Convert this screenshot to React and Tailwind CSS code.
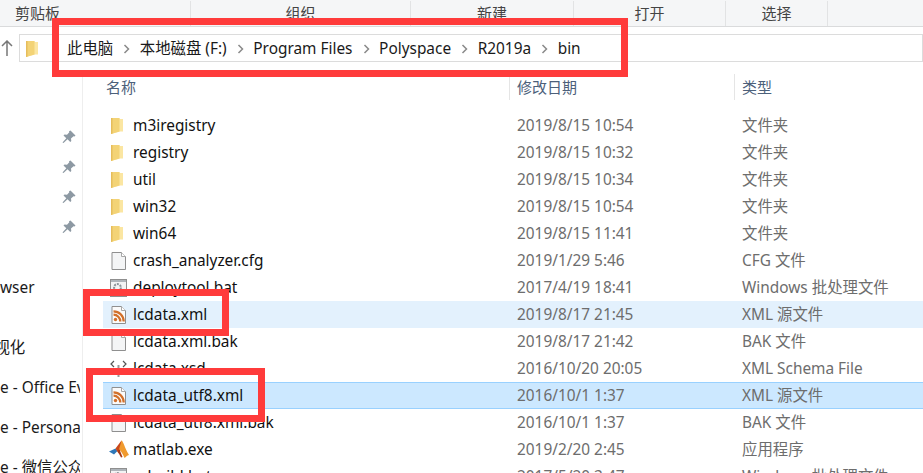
const font = { fontFamily: '"Noto Sans", "Noto Sans CJK SC", sans-serif' }

const files = [
  { name: 'm3iregistry', date: '2019/8/15 10:54', type: '文件夹', icon: 'folder' },
  { name: 'registry', date: '2019/8/15 10:32', type: '文件夹', icon: 'folder' },
  { name: 'util', date: '2019/8/15 10:34', type: '文件夹', icon: 'folder' },
  { name: 'win32', date: '2019/8/15 10:54', type: '文件夹', icon: 'folder' },
  { name: 'win64', date: '2019/8/15 11:41', type: '文件夹', icon: 'folder' },
  { name: 'crash_analyzer.cfg', date: '2019/1/29 5:46', type: 'CFG 文件', icon: 'file' },
  { name: 'deploytool.bat', date: '2017/4/19 18:41', type: 'Windows 批处理文件', icon: 'bat' },
  { name: 'lcdata.xml', date: '2019/8/17 21:45', type: 'XML 源文件', icon: 'xml', state: 'hover' },
  { name: 'lcdata.xml.bak', date: '2019/8/17 21:42', type: 'BAK 文件', icon: 'file' },
  { name: 'lcdata.xsd', date: '2016/10/20 20:05', type: 'XML Schema File', icon: 'xsd' },
  { name: 'lcdata_utf8.xml', date: '2016/10/1 1:37', type: 'XML 源文件', icon: 'xml', state: 'selected' },
  { name: 'lcdata_utf8.xml.bak', date: '2016/10/1 1:37', type: 'BAK 文件', icon: 'file' },
  { name: 'matlab.exe', date: '2019/2/20 2:45', type: '应用程序', icon: 'matlab' },
  { name: 'mbuild.bat', date: '2017/5/20 3:47', type: 'Windows 批处理文件', icon: 'bat' },
]

const crumbs = ['此电脑', '本地磁盘 (F:)', 'Program Files', 'Polyspace', 'R2019a', 'bin']

function Folder({ className = '' }) {
  return (
    <svg width="12" height="17" viewBox="0 0 12 17" className={className}>
      <path d="M0 1h8l1 1h3v12.500h-3l-9 2.500z" fill="#fbe6a2" />
      <path d="M0 1h8.500v13.500l-8.500 2.500z" fill="#f3d376" />
      <path d="M0 1h1.500v15.500l-1.500 .5z" fill="#e6bd5c" />
    </svg>
  )
}

function PlainFile() {
  return (
    <svg width="15" height="18" viewBox="0 0 15 18">
      <path d="M1 .5h9.500l4 4v13h-13.500z" fill="#f4f5f6" stroke="#8f8f8f" />
      <path d="M10.500 .5v4h4" fill="#fff" stroke="#a8a8a8" />
    </svg>
  )
}

function XmlFile() {
  return (
    <svg width="15" height="18" viewBox="0 0 15 18">
      <path d="M1 .5h9.500l4 4v13h-13.500z" fill="#fbfbfb" stroke="#8f8f8f" />
      <path d="M10.500 .5v4h4" fill="#fff" stroke="#a8a8a8" />
      <circle cx="4.500" cy="13.500" r="1.700" fill="#d2702a" />
      <path d="M2.500 8.700a6.800 6.800 0 0 1 6.800 6.800M2.500 5.300a10.200 10.200 0 0 1 10.200 10.200" fill="none" stroke="#d2702a" strokeWidth="2.300" />
    </svg>
  )
}

function BatFile() {
  return (
    <svg width="18" height="18" viewBox="0 0 18 18">
      <rect x=".5" y=".5" width="16" height="17" fill="#f2f3f4" stroke="#8f8f8f" />
      <path d="M1 1h15v2h-15z" fill="#aeb4ba" />
      <circle cx="7.500" cy="8.500" r="3.400" fill="none" stroke="#8d949a" strokeWidth="2" strokeDasharray="2 1" />
      <circle cx="11.500" cy="13" r="2.400" fill="none" stroke="#7f9fb8" strokeWidth="1.500" strokeDasharray="1.500 1" />
    </svg>
  )
}

function XsdFile() {
  return (
    <svg width="17" height="18" viewBox="0 0 17 18">
      <path d="M4 1l-3 3 3 3M13 1l3 3-3 3" fill="none" stroke="#555" strokeWidth="1.200" />
      <path d="M8.500 5v12" stroke="#999" strokeWidth="2" />
    </svg>
  )
}

function Matlab() {
  return (
    <svg width="20" height="20" viewBox="0 0 20 20">
      <path d="M0 11.500l6.500-3 2 2.500-3.500 3.500z" fill="#2f78b8" />
      <path d="M6.500 8.500l6-8 1.500 5-4.500 8z" fill="#c9481a" />
      <path d="M12.500 .5c2 1 3 7 7.500 14.500-2 .2-3 2-4.500 3-1.500-3-3-7-5.500-8.500z" fill="#f09a2e" />
      <path d="M8.500 11l2-1.500 3 7.500-1.500 .5z" fill="#a83a14" />
    </svg>
  )
}

function RowIcon({ icon }) {
  if (icon === 'folder') return <Folder className="-ml-[3px]" />
  if (icon === 'xml') return <XmlFile />
  if (icon === 'bat') return <BatFile />
  if (icon === 'xsd') return <XsdFile />
  if (icon === 'matlab') return <Matlab />
  return <PlainFile />
}

function Pin() {
  return (
    <svg width="14" height="14" viewBox="0 0 14 14">
      <path d="M8.500 .5l5 5-1 1-1-.3-2.500 2.300.3 2.500-1 1-2.800-2.800-4 3.800-1-.5 3.800-4.300-2.800-2.800 1-1 2.500.3 2.300-2.500-.3-1z" fill="#8d99a3" />
    </svg>
  )
}

function Mark({ className }) {
  return <div className={`absolute border-[7px] border-[#ff3b3b] ${className}`} />
}

export default function App() {
  return (
    <div style={font} className="relative h-[473px] w-[923px] overflow-hidden bg-white text-[15.4px] leading-none">
      {/* ribbon group labels */}
      <div className="flex h-[27px] border-b border-[#dadbdc] bg-[#f5f6f7] pt-[1px] text-[15px] text-[#444]">
        <div className="flex w-[191px] items-center border-r border-[#e2e3e4] pl-[15px]">剪贴板</div>
        <div className="flex w-[220px] items-center justify-center border-r border-[#e2e3e4]">组织</div>
        <div className="flex w-[163px] items-center justify-center border-r border-[#e2e3e4]">新建</div>
        <div className="flex w-[152px] items-center justify-center border-r border-[#e2e3e4]">打开</div>
        <div className="flex w-[102px] items-center justify-center border-r border-[#e2e3e4]">选择</div>
      </div>

      {/* address bar */}
      <div className="flex h-[47px] pt-[7px]">
        <div className="flex h-[28px] w-[19px] items-center pl-[1px]">
          <svg width="12" height="16" viewBox="0 0 12 16"><path d="M6 1v15M1 6l5-5 5 5" fill="none" stroke="#777" strokeWidth="1.500" /></svg>
        </div>
        <div className="flex h-[28px] flex-1 items-center border border-[#dcdcdc] pl-[6px]">
          <Folder className="mr-[29px]" />
          <div className="flex items-center pt-[1px] text-[#1a1a1a]">
            {crumbs.map((c, i) => (
              <span key={c} className="flex items-center">
                {i > 0 && (
                  <svg width="26.600" height="10" viewBox="0 0 26.600 10"><path d="M11.500 1l4 4-4 4" fill="none" stroke="#8a8a8a" strokeWidth="1.500" /></svg>
                )}
                {c}
              </span>
            ))}
          </div>
        </div>
      </div>

      <div className="flex">
        {/* nav pane */}
        <div className="h-[399px] w-[83px] shrink-0 overflow-hidden border-r border-[#eeeeee] text-[#1a1a1a]">
          <div className="flex flex-col items-end gap-[16px] pt-[56px] pr-[6px]">
            <Pin />
            <Pin />
            <Pin />
            <Pin />
          </div>
          <div className="mt-[46px] flex w-[80px] flex-col gap-[20px] overflow-hidden whitespace-nowrap">
            <div className="-ml-[9px] h-[20px]">owser</div>
            <div className="mt-[20px] -ml-[21px] h-[20px]">可视化</div>
            <div className="h-[20px]">e - Office Eve</div>
            <div className="h-[20px]">e - Personal</div>
            <div className="h-[20px]">e - 微信公众号</div>
          </div>
        </div>

        {/* file list */}
        <div className="flex-1">
          <div className="flex h-[26px] text-[15px] text-[#4c607a]">
            <div className="flex w-[426px] items-center pl-[23px]">名称</div>
            <div className="flex w-[225px] items-center border-l border-[#e5e5e5] pl-[7px]">修改日期</div>
            <div className="flex items-center border-l border-[#e5e5e5] pl-[7px]">类型</div>
          </div>
          <div className="mt-[12px] ml-[20px]">
            {files.map((f) => (
              <div
                key={f.name}
                className={`flex h-[27px] items-center border-y ${f.state === 'hover' ? 'border-[#e3f1fd] bg-[#e3f1fd]' : f.state === 'selected' ? 'border-[#99d1ff] bg-[#cce8ff]' : 'border-transparent'}`}
              >
                <div className="flex w-[30px] shrink-0 justify-center pl-[1px]">
                  <RowIcon icon={f.icon} />
                </div>
                <div className="w-[384px] shrink-0 pt-[1px] text-[#111]">{f.name}</div>
                <div className="w-[225px] shrink-0 pt-[1px] text-[#6d6d6d]">{f.date}</div>
                <div className="pt-[1px] text-[#6d6d6d]">{f.type}</div>
              </div>
            ))}
          </div>
        </div>
      </div>

      {/* red annotation boxes */}
      <Mark className="top-[18px] left-[52px] h-[59px] w-[576px]" />
      <Mark className="top-[289px] left-[83px] h-[47px] w-[146px]" />
      <Mark className="top-[368px] left-[86px] h-[54px] w-[179px]" />
    </div>
  )
}
